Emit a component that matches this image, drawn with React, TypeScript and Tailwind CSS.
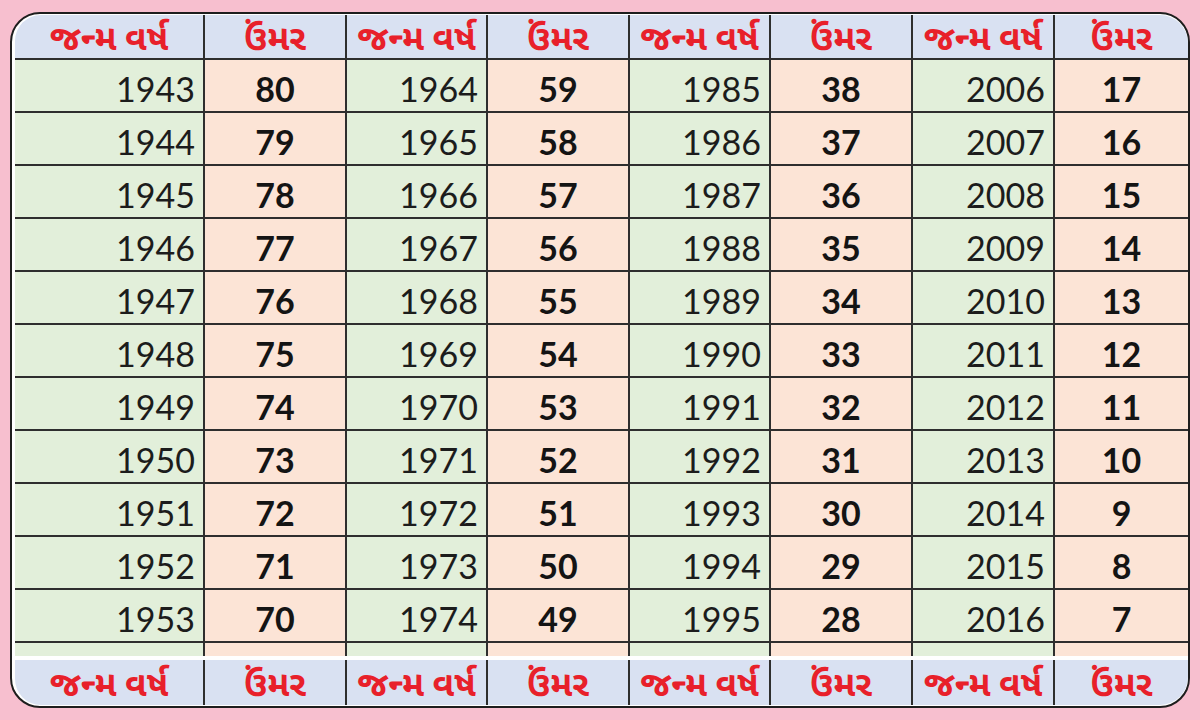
import React from 'react';

const GROUPS = [
  { start: 1943, age: 80 },
  { start: 1964, age: 59 },
  { start: 1985, age: 38 },
  { start: 2006, age: 17 },
];

const ROWS = Array.from({ length: 11 }, (_, i) => i);

const GRID = 'grid grid-cols-[190px_142px_141px_142px_141px_142px_142px_133px]';
const LINE = 'border-[#2e2e2e]';

function HeaderRow({ bottom }: { bottom?: boolean }) {
  return (
    <div className={`${GRID} h-[45px] bg-[#d9e1f2] ${bottom ? '' : `border-b-2 ${LINE}`}`}>
      {GROUPS.map((g, gi) => (
        <React.Fragment key={g.start}>
          <div className={`flex items-center justify-center border-r-2 ${LINE} text-[35px] leading-none font-bold text-[#e8202a]`}>
            જન્મ વર્ષ
          </div>
          <div className={`flex items-center justify-center text-[35px] leading-none font-bold text-[#e8202a] ${gi < 3 ? `border-r-2 ${LINE}` : ''}`}>
            ઉંમર
          </div>
        </React.Fragment>
      ))}
    </div>
  );
}

export default function App() {
  return (
    <div className="h-[720px] w-[1200px] bg-[#f7bfcf] px-[10px] pt-[12px] pb-[12px] font-['Lato','Noto_Sans','Noto_Sans_Gujarati',sans-serif]">
      <div className="h-full overflow-hidden rounded-[30px] border-2 border-[#1e1e1e] bg-white pl-[3px] pt-[1px]">
        <div className="overflow-hidden rounded-tl-[26px] rounded-tr-[28px] rounded-bl-[26px] rounded-br-[28px]">
          <HeaderRow />

          {ROWS.map(r => (
            <div key={r} className={`${GRID} h-[53px] border-b-2 ${LINE}`}>
              {GROUPS.map((g, gi) => (
                <React.Fragment key={g.start}>
                  <div className={`flex items-center justify-end bg-[#e2efda] pr-[8px] pt-[6px] border-r-2 ${LINE} text-[34px] leading-none text-[#1c1c1c]`}>
                    {g.start + r}
                  </div>
                  <div className={`flex items-center justify-center bg-[#fce4d6] pt-[6px] text-[34px] font-bold leading-none text-[#141414] ${gi < 3 ? `border-r-2 ${LINE}` : ''}`}>
                    {g.age - r}
                  </div>
                </React.Fragment>
              ))}
            </div>
          ))}

          {/* partial row cut off before footer */}
          <div className={`${GRID} h-[13px]`}>
            {GROUPS.map((g, gi) => (
              <React.Fragment key={g.start}>
                <div className={`bg-[#e2efda] border-r-2 ${LINE}`} />
                <div className={`bg-[#fce4d6] ${gi < 3 ? `border-r-2 ${LINE}` : ''}`} />
              </React.Fragment>
            ))}
          </div>
          <div className="h-[4px] bg-white" />

          <HeaderRow bottom />
        </div>
      </div>
    </div>
  );
}
